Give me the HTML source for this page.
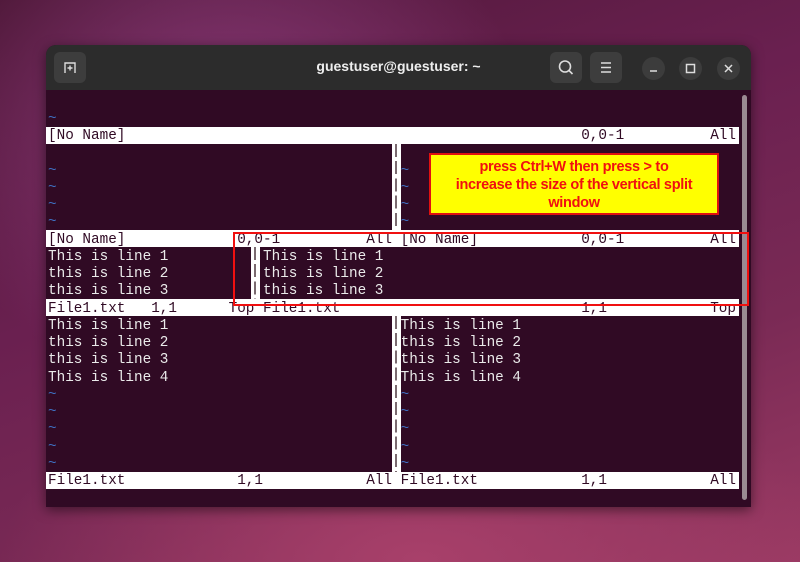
<!DOCTYPE html>
<html><head><meta charset="utf-8"><style>
*{margin:0;padding:0;box-sizing:border-box}
body{width:800px;height:562px;overflow:hidden;position:relative;
background:radial-gradient(ellipse 300px 260px at 230px 140px,#8a3a78 0%,rgba(138,58,120,0) 100%),
radial-gradient(ellipse 420px 200px at 420px 560px,#a8406a 0%,rgba(168,64,106,0) 100%),
linear-gradient(160deg,#4e1838 0%,#6a2050 40%,#7a2a55 70%,#9a3a63 100%);}
.win{position:absolute;left:46px;top:45px;width:705px;height:462px;background:#300a24;border-radius:10px 10px 0 0;overflow:hidden;box-shadow:0 3px 12px rgba(0,0,0,.5)}
.tb{position:absolute;left:0;top:0;width:705px;height:45px;background:#2c2c2c}
.btn{position:absolute;top:7px;width:32px;height:31px;background:#3d3d3d;border-radius:6px}
.circ{position:absolute;top:12px;width:23px;height:23px;border-radius:50%;background:#3c3c3c}
.title{position:absolute;left:0;width:705px;top:13px;text-align:center;color:#eee;font:bold 14px "Liberation Sans",sans-serif}
.t{position:absolute;font:14.33px/17.25px "Liberation Mono",monospace;color:#eaeaea;white-space:pre;margin-top:1.5px}
.st{position:absolute;left:2px;width:691px;height:17.25px;background:#fff}
.tl{color:#3f6fc0}
.sep{position:absolute;width:8.6px;background:#fff}
.sep:after{content:"";position:absolute;left:3px;top:0;bottom:0;width:2px;background:repeating-linear-gradient(#7a6a70 0 13px,transparent 13px 17.25px)}
</style></head><body>
<div class="win">
<div class="tb">
<div class="btn" style="left:8px"><svg width="32" height="31"><path d="M11 21V11h10v10M16 13.5v5M13.5 16h5" stroke="#ddd" stroke-width="1.4" fill="none"/></svg></div>
<div class="title">guestuser@guestuser: ~</div>
<div class="btn" style="left:504px"><svg width="32" height="31"><circle cx="15" cy="14.5" r="5.5" stroke="#ddd" stroke-width="1.6" fill="none"/><path d="M19 18.5l3.5 3.5" stroke="#ddd" stroke-width="1.6"/></svg></div>
<div class="btn" style="left:544px"><svg width="32" height="31"><path d="M11 11h10M11 15.5h10M11 20h10" stroke="#ddd" stroke-width="1.5"/></svg></div>
<div class="circ" style="left:596px"><svg width="23" height="23"><path d="M8 14h7" stroke="#ddd" stroke-width="1.5"/></svg></div>
<div class="circ" style="left:633px"><svg width="23" height="23"><rect x="7.5" y="7.5" width="8" height="8" stroke="#ddd" stroke-width="1.5" fill="none"/></svg></div>
<div class="circ" style="left:671px"><svg width="23" height="23"><path d="M8 8l7 7M15 8l-7 7" stroke="#ddd" stroke-width="1.5"/></svg></div>
</div>
<div style="position:absolute;left:696px;top:50px;width:5px;height:405px;background:#9a8a92;border-radius:3px"></div>
</div>
<div id="term" style="position:absolute;left:0;top:0">
</div>
<script>
var T=document.getElementById('term');var h='';
function Y(r){return 92+r*17.25}
function X(c){return 48+c*8.6}
function tx(r,c,s,cls){h+='<div class="t '+(cls||'')+'" style="left:'+X(c)+'px;top:'+Y(r)+'px">'+s+'</div>'}
function st(r,items){h+='<div class="st" style="left:46px;width:693px;top:'+Y(r)+'px"></div>';items.forEach(function(i){h+='<div class="t" style="color:#300a24;left:'+X(i[0])+'px;top:'+Y(r)+'px">'+i[1]+'</div>'})}
tx(1,0,'~','tl');
st(2,[[0,'[No Name]'],[62,'0,0-1'],[77,'All']]);
for(var r=4;r<=7;r++){tx(r,0,'~','tl');tx(r,41,'~','tl');}
h+='<div class="sep" style="left:'+X(40)+'px;top:'+Y(3)+'px;height:'+(5*17.25)+'px"></div>';
st(8,[[0,'[No Name]'],[22,'0,0-1'],[37,'All'],[41,'[No Name]'],[62,'0,0-1'],[77,'All']]);
var L=['This is line 1','this is line 2','this is line 3','This is line 4'];
for(var i=0;i<3;i++){tx(9+i,0,L[i]);tx(9+i,25,L[i]);}
h+='<div class="sep" style="left:'+X(23.6)+'px;top:'+Y(9)+'px;height:'+(3*17.25)+'px"></div>';
st(12,[[0,'File1.txt'],[12,'1,1'],[21,'Top'],[25,'File1.txt'],[62,'1,1'],[77,'Top']]);
for(var i=0;i<4;i++){tx(13+i,0,L[i]);tx(13+i,41,L[i]);}
for(var r=17;r<=21;r++){tx(r,0,'~','tl');tx(r,41,'~','tl');}
h+='<div class="sep" style="left:'+X(40)+'px;top:'+Y(13)+'px;height:'+(9*17.25)+'px"></div>';
st(22,[[0,'File1.txt'],[22,'1,1'],[37,'All'],[41,'File1.txt'],[62,'1,1'],[77,'All']]);
T.innerHTML=h;
</script>
<div style="position:absolute;left:233px;top:232px;width:516px;height:74px;border:2.5px solid #f01010"></div>
<div style="position:absolute;left:429px;top:153px;width:290px;height:62px;background:#ffff00;border:2px solid #e01010;color:#f01010;font:bold 14.5px/18px 'Liberation Sans',sans-serif;text-align:center;padding-top:3px;letter-spacing:-0.3px">press Ctrl+W then press &gt; to<br>increase the size of the vertical split<br>window</div>
</body></html>
